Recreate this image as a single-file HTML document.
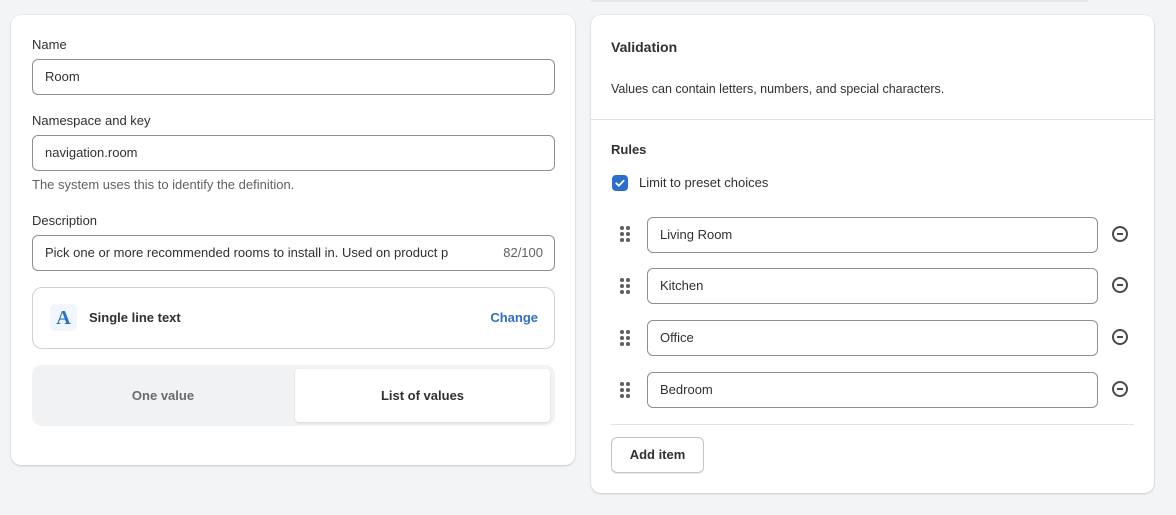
<!DOCTYPE html>
<html><head><style>
*{box-sizing:border-box;margin:0;padding:0}
body{width:1176px;height:515px;background:#f3f4f6;font-family:"Liberation Sans",sans-serif;font-size:13px;color:#303030;position:relative;overflow:hidden}
.card{position:absolute;background:#fff;border-radius:10px;box-shadow:0 1px 2px rgba(0,0,0,.15),0 0 0 1px rgba(0,0,0,.03)}
.abs{position:absolute}
.inp{position:absolute;border:1px solid #8f8f8f;border-radius:6px;height:36px;padding:0 12px;line-height:34px;background:#fff;white-space:nowrap;overflow:hidden}
.lbl{position:absolute;line-height:16px}
.drag{position:absolute;width:10px;height:16px}
.drag i{position:absolute;width:3.5px;height:3.5px;border-radius:50%;background:#616161}
.minus{position:absolute;width:16px;height:16px;border:2px solid #4a4a4a;border-radius:50%}
.minus:after{content:"";position:absolute;left:3px;right:3px;top:5px;height:2px;background:#4a4a4a}
</style></head><body>
<div class="abs" style="left:591px;top:0;width:497px;height:2px;background:#e6e6e6"></div>

<div class="card" style="left:11px;top:15px;width:564px;height:450px">
  <div class="lbl" style="left:21px;top:22px">Name</div>
  <div class="inp" style="left:21px;top:44px;width:523px">Room</div>
  <div class="lbl" style="left:21px;top:98px">Namespace and key</div>
  <div class="inp" style="left:21px;top:120px;width:523px">navigation.room</div>
  <div class="lbl" style="left:21px;top:162px;color:#616161">The system uses this to identify the definition.</div>
  <div class="lbl" style="left:21px;top:198px">Description</div>
  <div class="inp" style="left:21px;top:220px;width:523px">Pick one or more recommended rooms to install in. Used on product p<span style="position:absolute;right:11px;color:#616161;background:#fff;padding-left:8px">82/100</span></div>
  <div class="abs" style="left:21px;top:272px;width:523px;height:62px;border:1px solid #d0d0d0;border-radius:10px">
    <div class="abs" style="left:17px;top:16px;width:27px;height:27px;background:#f1f6fc;border-radius:5px;color:#2c6ecb;font-family:'Liberation Serif',serif;font-weight:bold;font-size:20px;text-align:center;line-height:28px">A</div>
    <div class="abs" style="left:56px;top:22px;font-weight:bold;font-size:13px">Single line text</div>
    <div class="abs" style="right:16px;top:22px;font-weight:bold;color:#2c6ecb">Change</div>
  </div>
  <div class="abs" style="left:21px;top:350px;width:523px;height:61px;background:#f1f2f4;border-radius:10px">
    <div class="abs" style="left:0;width:262px;top:23px;text-align:center;color:#6b6b6b;font-weight:bold">One value</div>
    <div class="abs" style="left:263px;top:4px;width:255px;height:53px;background:#fff;border-radius:4px;box-shadow:0 1px 2px rgba(0,0,0,.12);text-align:center;line-height:53px;font-weight:bold">List of values</div>
  </div>
</div>

<div class="card" style="left:591px;top:15px;width:563px;height:478px">
  <div class="lbl" style="left:20px;top:24px;font-weight:bold;font-size:14px">Validation</div>
  <div class="lbl" style="left:20px;top:66px;font-size:12.5px">Values can contain letters, numbers, and special characters.</div>
  <div class="abs" style="left:0;right:0;top:104px;height:1px;background:#e3e3e3"></div>
  <div class="lbl" style="left:20px;top:127px;font-weight:bold">Rules</div>
  <div class="abs" style="left:21px;top:160px;width:16px;height:16px;background:#2c6ecb;border-radius:4px">
    <svg width="16" height="16" viewBox="0 0 16 16" style="position:absolute;left:0;top:0"><path d="M4.3 8.3l2.5 2.4 4.8-5" stroke="#fff" stroke-width="1.8" fill="none" stroke-linecap="round" stroke-linejoin="round"/></svg>
  </div>
  <div class="lbl" style="left:48px;top:160px">Limit to preset choices</div>

  <div class="drag" style="left:29px;top:211px"><i style="left:0;top:0"></i><i style="left:6px;top:0"></i><i style="left:0;top:6px"></i><i style="left:6px;top:6px"></i><i style="left:0;top:12px"></i><i style="left:6px;top:12px"></i></div>
  <div class="inp" style="left:56px;top:202px;width:451px">Living Room</div>
  <div class="minus" style="left:521px;top:211px"></div>

  <div class="drag" style="left:29px;top:263px"><i style="left:0;top:0"></i><i style="left:6px;top:0"></i><i style="left:0;top:6px"></i><i style="left:6px;top:6px"></i><i style="left:0;top:12px"></i><i style="left:6px;top:12px"></i></div>
  <div class="inp" style="left:56px;top:253px;width:451px">Kitchen</div>
  <div class="minus" style="left:521px;top:262px"></div>

  <div class="drag" style="left:29px;top:315px"><i style="left:0;top:0"></i><i style="left:6px;top:0"></i><i style="left:0;top:6px"></i><i style="left:6px;top:6px"></i><i style="left:0;top:12px"></i><i style="left:6px;top:12px"></i></div>
  <div class="inp" style="left:56px;top:305px;width:451px">Office</div>
  <div class="minus" style="left:521px;top:314px"></div>

  <div class="drag" style="left:29px;top:367px"><i style="left:0;top:0"></i><i style="left:6px;top:0"></i><i style="left:0;top:6px"></i><i style="left:6px;top:6px"></i><i style="left:0;top:12px"></i><i style="left:6px;top:12px"></i></div>
  <div class="inp" style="left:56px;top:357px;width:451px">Bedroom</div>
  <div class="minus" style="left:521px;top:366px"></div>

  <div class="abs" style="left:20px;width:523px;top:409px;height:1px;background:#e3e3e3"></div>
  <div class="abs" style="left:20px;top:422px;width:93px;height:36px;border:1px solid #c4c4c4;border-radius:6px;text-align:center;line-height:34px;font-weight:bold;box-shadow:0 1px 0 rgba(0,0,0,.08)">Add item</div>
</div>
</body></html>
